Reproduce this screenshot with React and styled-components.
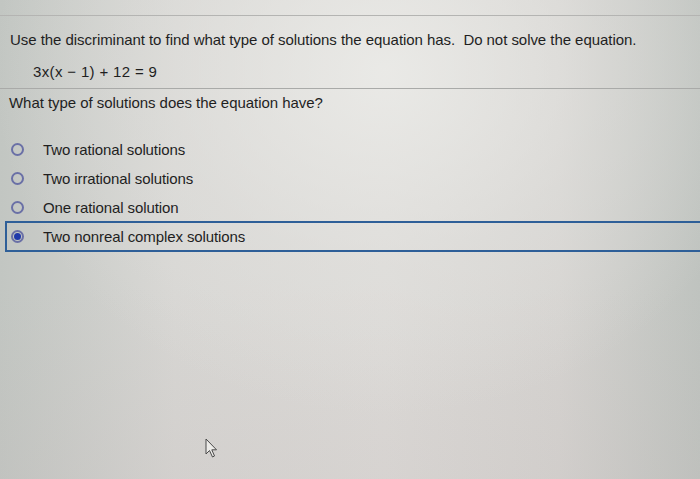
import React from "react";
import styled, { createGlobalStyle } from "styled-components";

const Global = createGlobalStyle`
  html, body { margin: 0; padding: 0; }
  body { font-family: "Liberation Sans", Arial, sans-serif; }
`;

const Screen = styled.div`
  position: relative;
  width: 700px;
  height: 479px;
  overflow: hidden;
  background:
    radial-gradient(ellipse 70% 90% at 55% 15%, rgba(236,236,233,0.85) 0%, rgba(228,228,225,0.4) 45%, rgba(0,0,0,0) 80%),
    linear-gradient(180deg, rgba(0,0,0,0) 60%, rgba(190,180,180,0.18) 100%),
    linear-gradient(90deg, #c2c6c2 0%, #d7d6d3 25%, #dcdad7 55%, #d5d3d0 80%, #bfc3bf 100%);
  color: #1f1f1f;
  font-size: 15px;
`;

const Header = styled.div`
  height: 15px;
  border-bottom: 1px solid #b4b4b2;
`;

const Instruction = styled.div`
  padding: 15px 0 0 10px;
  line-height: 18px;
  letter-spacing: -0.05px;
`;

const Equation = styled.div`
  padding: 14px 0 0 33px;
  line-height: 18px;
  letter-spacing: 0.35px;
`;

const Divider = styled.div`
  margin-top: 7px;
  border-top: 1px solid #a9aaa8;
`;

const Question = styled.div`
  padding: 5px 0 0 9px;
  line-height: 18px;
  letter-spacing: -0.05px;
`;

const Options = styled.div`
  margin-top: 23px;
  display: flex;
  flex-direction: column;
`;

const Option = styled.div`
  display: flex;
  align-items: center;
  height: ${(p) => (p.$selected ? "31px" : "29px")};
  margin-left: ${(p) => (p.$selected ? "5px" : "7px")};
  margin-right: ${(p) => (p.$selected ? "-4px" : "0")};
  margin-top: ${(p) => (p.$selected ? "-1px" : "0")};
  border: ${(p) => (p.$selected ? "2px solid #2e5f98" : "none")};
  box-sizing: border-box;
  padding-left: 4px;
  letter-spacing: -0.1px;
`;

const Radio = styled.span`
  width: 13px;
  height: 13px;
  box-sizing: border-box;
  border-radius: 50%;
  border: 2px solid #6a70a6;
  display: inline-flex;
  align-items: center;
  justify-content: center;
  margin-right: 19px;
  flex: none;
  &::after {
    content: "";
    display: ${(p) => (p.$checked ? "block" : "none")};
    width: 7px;
    height: 7px;
    border-radius: 50%;
    background: #1f38aa;
  }
`;

const Cursor = styled.svg`
  position: absolute;
  left: 205px;
  top: 438px;
`;

const options = [
  "Two rational solutions",
  "Two irrational solutions",
  "One rational solution",
  "Two nonreal complex solutions",
];

export default function App() {
  return (
    <Screen>
      <Global />
      <Header />
      <Instruction>
        Use the discriminant to find what type of solutions the equation has.&nbsp; Do not solve the equation.
      </Instruction>
      <Equation>3x(x − 1) + 12 = 9</Equation>
      <Divider />
      <Question>What type of solutions does the equation have?</Question>
      <Options>
        {options.map((o, i) => (
          <Option key={o} $selected={i === 3}>
            <Radio $checked={i === 3} />
            {o}
          </Option>
        ))}
      </Options>
      <Cursor width="14" height="22" viewBox="0 0 14 22">
        <path
          d="M1 1 L1 16 L4.5 12.5 L7.5 19 L9.5 18 L6.8 11.8 L11.5 11.8 Z"
          fill="#ecebe8"
          stroke="#4a4a4a"
          strokeWidth="1"
          strokeLinejoin="round"
        />
      </Cursor>
    </Screen>
  );
}
